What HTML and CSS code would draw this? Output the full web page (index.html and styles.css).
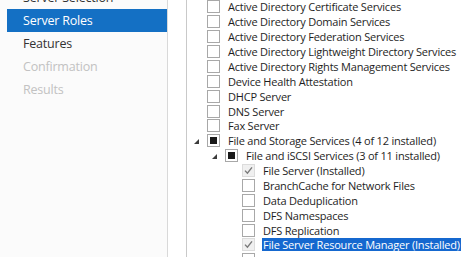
FILE: index.html
```html
<!DOCTYPE html>
<html>
<head>
<meta charset="utf-8">
<link rel="stylesheet" href="styles.css">
</head>
<body>
<div class="page">
  <nav class="nav">
    <ul class="steps">
      <li class="step">Server Selection</li>
      <li class="step active">Server Roles</li>
      <li class="step">Features</li>
      <li class="step disabled">Confirmation</li>
      <li class="step disabled">Results</li>
    </ul>
  </nav>
  <div class="spacer"></div>
  <main class="content">
    <ul class="tree">
      <li class="row"><span class="exp"></span><span class="cb"></span><span class="label">Active Directory Certificate Services</span></li>
      <li class="row"><span class="exp"></span><span class="cb"></span><span class="label">Active Directory Domain Services</span></li>
      <li class="row"><span class="exp"></span><span class="cb"></span><span class="label">Active Directory Federation Services</span></li>
      <li class="row"><span class="exp"></span><span class="cb"></span><span class="label">Active Directory Lightweight Directory Services</span></li>
      <li class="row"><span class="exp"></span><span class="cb"></span><span class="label">Active Directory Rights Management Services</span></li>
      <li class="row"><span class="exp"></span><span class="cb"></span><span class="label">Device Health Attestation</span></li>
      <li class="row"><span class="exp"></span><span class="cb"></span><span class="label">DHCP Server</span></li>
      <li class="row"><span class="exp"></span><span class="cb"></span><span class="label">DNS Server</span></li>
      <li class="row"><span class="exp"></span><span class="cb"></span><span class="label">Fax Server</span></li>
      <li class="row"><span class="exp open"></span><span class="cb partial"></span><span class="label">File and Storage Services (4 of 12 installed)</span></li>
      <li class="row lvl1"><span class="exp open"></span><span class="cb partial"></span><span class="label">File and iSCSI Services (3 of 11 installed)</span></li>
      <li class="row lvl2"><span class="exp"></span><span class="cb checked"><svg viewBox="0 0 13 13" width="13" height="13"><path d="M3 6.6 L5.4 9.2 L10 3.4" fill="none" stroke="#7a7a7a" stroke-width="1.4"/></svg></span><span class="label">File Server (Installed)</span></li>
      <li class="row lvl2"><span class="exp"></span><span class="cb"></span><span class="label">BranchCache for Network Files</span></li>
      <li class="row lvl2"><span class="exp"></span><span class="cb"></span><span class="label">Data Deduplication</span></li>
      <li class="row lvl2"><span class="exp"></span><span class="cb"></span><span class="label">DFS Namespaces</span></li>
      <li class="row lvl2"><span class="exp"></span><span class="cb"></span><span class="label">DFS Replication</span></li>
      <li class="row lvl2"><span class="exp"></span><span class="cb checked"><svg viewBox="0 0 13 13" width="13" height="13"><path d="M3 6.6 L5.4 9.2 L10 3.4" fill="none" stroke="#7a7a7a" stroke-width="1.4"/></svg></span><span class="label selected">File Server Resource Manager (Installed)</span></li>
      <li class="row lvl2"><span class="exp"></span><span class="cb"></span></li>
    </ul>
  </main>
</div>
</body>
</html>
```
FILE: styles.css
```css
* { box-sizing: border-box; }
html, body { margin: 0; padding: 0; }
body {
  width: 474px;
  height: 257px;
  overflow: hidden;
  background: #ffffff;
  font-family: "Open Sans", "Noto Sans", sans-serif;
  color: #1e1e1e;
}
.page {
  display: flex;
  height: 257px;
}
.nav {
  width: 168px;
  flex: none;
  background: #fbfbfb;
  border-right: 1px solid #d9d9d9;
  overflow: hidden;
}
.steps {
  list-style: none;
  margin: -14px 0 0 7px;
  padding: 0;
}
.step {
  height: 23px;
  line-height: 23px;
  padding-left: 16px;
  font-size: 12.5px;
  letter-spacing: -0.2px;
  color: #333333;
  white-space: nowrap;
}
.step.active {
  background: #1470c4;
  color: #ffffff;
}
.step.disabled { color: #c2c2c2; }
.spacer {
  width: 19px;
  flex: none;
  border-right: 1px solid #c9c9c9;
}
.content {
  flex: 1;
  overflow: hidden;
}
.tree {
  list-style: none;
  margin: -0.5px 0 0 0;
  padding: 0 0 0 6px;
}
.row {
  display: flex;
  align-items: center;
  height: 14.875px;
  white-space: nowrap;
  font-size: 11px;
  letter-spacing: -0.2px;
}
.row.lvl1 { padding-left: 18px; }
.row.lvl2 { padding-left: 35px; }
.exp {
  width: 10px;
  height: 10px;
  flex: none;
  margin-right: 4px;
  position: relative;
}
.exp.open::after {
  content: "";
  position: absolute;
  left: 1px;
  top: 3px;
  width: 0;
  height: 0;
  border-style: solid;
  border-width: 0 0 5px 5px;
  border-color: transparent transparent #3c3c3c transparent;
}
.cb {
  width: 13px;
  height: 13px;
  flex: none;
  border: 1px solid #a8a8a8;
  background: #ffffff;
  margin-right: 7px;
  display: flex;
  align-items: center;
  justify-content: center;
}
.cb.partial::after {
  content: "";
  width: 7px;
  height: 7px;
  background: #1a1a1a;
}
.cb.checked {
  border-color: #dcdcdc;
  background: #f0f0f0;
}
.cb.checked svg { flex: none; margin: -1px; }
.label {
  padding: 0 1px;
  line-height: 13px;
}
.label.selected {
  background: #1568cf;
  color: #ffffff;
}
```
